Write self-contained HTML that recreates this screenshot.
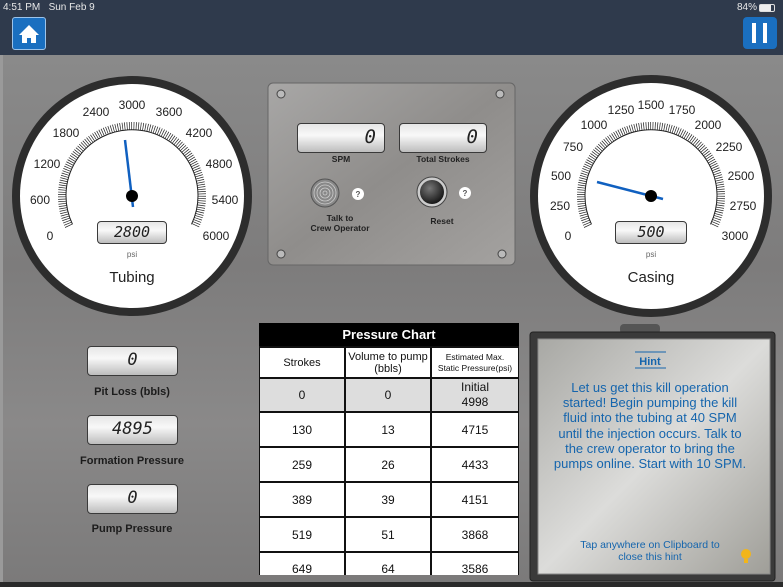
<!DOCTYPE html>
<html><head><meta charset="utf-8"><style>
*{margin:0;padding:0;box-sizing:border-box}
body{width:783px;height:587px;overflow:hidden;position:relative;font-family:"Liberation Sans",Arial,sans-serif;background:#8c8b8b}
.top{position:absolute;left:0;top:0;width:783px;height:55px;background:#2f3a4c}
.st{position:absolute;top:2px;font-size:10px;color:#e8e8e8}
.metal{position:absolute;left:0;top:55px;width:783px;height:527px;background:linear-gradient(180deg,#8a8a8a 0%,#7d7c7c 40%,#8a8989 70%,#7b7a7a 100%);border-left:3px solid #9a9a9a}
.bot{position:absolute;left:0;top:582px;width:783px;height:5px;background:#2a2a2a}
.lcd{position:absolute;border:1.5px solid #3a3a3a;border-radius:4px;background:linear-gradient(180deg,#e6e6e6,#f8f8f8 40%,#bdbdbd);font-family:"DejaVu Sans Mono",monospace;font-style:italic;color:#222;text-align:right;padding-right:8px}
.lbl{position:absolute;font-weight:bold;font-size:11px;color:#1c1c1c;text-align:center}
table{border-collapse:collapse}
td{border:2px solid #111;text-align:center;font-size:12px;color:#111;background:#fff}
</style></head><body>
<div class="top"></div>
<div class="st" style="left:3px">4:51 PM&nbsp;&nbsp; Sun Feb 9</div>
<div class="st" style="left:737px">84%</div>
<div style="position:absolute;left:759px;top:4px;width:16px;height:8px;border:1px solid #ddd;border-radius:2px"><div style="width:11px;height:6px;background:#eee"></div></div>
<div style="position:absolute;left:12px;top:17px;width:34px;height:33px;background:#1a6fc0;border:1px solid #9cc3ea;border-radius:3px"></div>
<svg style="position:absolute;left:12px;top:17px" width="34" height="33"><path d="M17 8 L27 18 L24 18 L24 26 L19 26 L19 21 L15 21 L15 26 L10 26 L10 18 L7 18 Z" fill="#fff"/></svg>
<div style="position:absolute;left:743px;top:17px;width:34px;height:32px;background:#1a6fc0;border-radius:4px"></div>
<div style="position:absolute;left:752px;top:23px;width:4px;height:20px;background:#fff"></div>
<div style="position:absolute;left:763px;top:23px;width:4px;height:20px;background:#fff"></div>
<div class="metal"></div>
<div class="bot"></div>

<svg style="position:absolute;left:0;top:0" width="783" height="587" font-family="Liberation Sans,Arial,sans-serif">
<defs>
<linearGradient id="pl" x1="0" y1="0" x2="1" y2="1"><stop offset="0" stop-color="#a8a7a6"/><stop offset=".5" stop-color="#8f8d8b"/><stop offset="1" stop-color="#a4a2a0"/></linearGradient>
<radialGradient id="btn" cx=".4" cy=".35" r=".7"><stop offset="0" stop-color="#777"/><stop offset="1" stop-color="#111"/></radialGradient>
</defs>
<!-- left gauge -->
<circle cx="132" cy="196" r="120" fill="#2d2d2d"/>
<circle cx="132" cy="196" r="112" fill="#fff"/>
<path d="M68.8 226.1 A70 70 0 1 1 195.2 226.1" fill="none" stroke="#222" stroke-width="8" stroke-dasharray="0.7 1.6"/>
<path d="M72.5 224.3 A66 66 0 1 1 191.5 224.3" fill="none" stroke="#222" stroke-width="1"/>
<g font-size="12" fill="#222" text-anchor="middle">
<text x="50" y="240">0</text><text x="40" y="204">600</text><text x="47" y="168">1200</text><text x="66" y="137">1800</text><text x="96" y="116">2400</text><text x="132" y="109">3000</text><text x="169" y="116">3600</text><text x="199" y="137">4200</text><text x="219" y="168">4800</text><text x="225" y="204">5400</text><text x="216" y="240">6000</text>
</g>
<line x1="133" y1="207" x2="125" y2="140" stroke="#1060c0" stroke-width="2.5"/>
<circle cx="132" cy="196" r="6" fill="#000"/>
<text x="132" y="257" font-size="8" fill="#666" text-anchor="middle">psi</text>
<text x="132" y="282" font-size="15" fill="#222" text-anchor="middle">Tubing</text>
<!-- right gauge -->
<circle cx="651" cy="196" r="121" fill="#2d2d2d"/>
<circle cx="651" cy="196" r="113" fill="#fff"/>
<path d="M587.8 226.1 A70 70 0 1 1 714.2 226.1" fill="none" stroke="#222" stroke-width="8" stroke-dasharray="0.7 1.6"/>
<path d="M591.5 224.3 A66 66 0 1 1 710.5 224.3" fill="none" stroke="#222" stroke-width="1"/>
<g font-size="12" fill="#222" text-anchor="middle">
<text x="568" y="240">0</text><text x="560" y="210">250</text><text x="561" y="180">500</text><text x="573" y="151">750</text><text x="594" y="129">1000</text><text x="621" y="114">1250</text><text x="651" y="109">1500</text><text x="682" y="114">1750</text><text x="708" y="129">2000</text><text x="729" y="151">2250</text><text x="741" y="180">2500</text><text x="743" y="210">2750</text><text x="735" y="240">3000</text>
</g>
<line x1="663" y1="199" x2="597" y2="182" stroke="#1060c0" stroke-width="2.5"/>
<circle cx="651" cy="196" r="6" fill="#000"/>
<text x="651" y="257" font-size="8" fill="#666" text-anchor="middle">psi</text>
<text x="651" y="282" font-size="15" fill="#222" text-anchor="middle">Casing</text>
<!-- center panel -->
<rect x="268" y="83" width="247" height="182" rx="5" fill="url(#pl)" stroke="#666"/>
<g fill="#bbb" stroke="#444"><circle cx="281" cy="94" r="4"/><circle cx="500" cy="94" r="4"/><circle cx="281" cy="254" r="4"/><circle cx="502" cy="254" r="4"/></g>
<circle cx="325" cy="193" r="14" fill="#888" stroke="#555"/>
<g fill="none" stroke="#ccc" stroke-width=".8"><circle cx="325" cy="193" r="11"/><circle cx="325" cy="193" r="8"/><circle cx="325" cy="193" r="5"/><circle cx="325" cy="193" r="2"/></g>
<circle cx="432" cy="192" r="15" fill="#ccc" stroke="#444"/>
<circle cx="432" cy="192" r="12" fill="url(#btn)"/>
<g font-size="8" font-weight="bold" text-anchor="middle"><circle cx="358" cy="194" r="6" fill="#fff"/><text x="358" y="197" fill="#555">?</text><circle cx="465" cy="193" r="6" fill="#fff"/><text x="465" y="196" fill="#555">?</text></g>
<g font-size="8.5" font-weight="bold" fill="#222" text-anchor="middle"><text x="341" y="162">SPM</text><text x="443" y="162">Total Strokes</text><text x="340" y="221">Talk to</text><text x="340" y="231">Crew Operator</text><text x="442" y="224">Reset</text></g>
<!-- clipboard -->
<rect x="620" y="324" width="40" height="10" rx="4" fill="#555"/>
<rect x="530" y="332" width="245" height="249" rx="3" fill="#3a3a3a" stroke="#222"/>
<defs><linearGradient id="pp" x1="0" y1="0" x2="1" y2="1"><stop offset="0" stop-color="#a8a8a4"/><stop offset=".5" stop-color="#dcdcda"/><stop offset="1" stop-color="#9f9e98"/></linearGradient></defs>
<rect x="538" y="339" width="232" height="235" fill="url(#pp)" stroke="#888"/>
<g fill="#1565ad" text-anchor="middle" font-size="13">
<line x1="635" y1="352" x2="666" y2="352" stroke="#1565ad"/>
<text x="650" y="365" font-size="11" font-weight="bold">Hint</text>
<line x1="635" y1="368" x2="666" y2="368" stroke="#1565ad"/>
<text x="650" y="392">Let us get this kill operation</text>
<text x="650" y="407">started! Begin pumping the kill</text>
<text x="650" y="422">fluid into the tubing at 40 SPM</text>
<text x="650" y="438">until the injection occurs. Talk to</text>
<text x="650" y="453">the crew operator to bring the</text>
<text x="650" y="468">pumps online. Start with 10 SPM.</text>
<text x="650" y="548" font-size="10.5">Tap anywhere on Clipboard to</text>
<text x="650" y="560" font-size="10.5">close this hint</text>
</g>
<circle cx="746" cy="554" r="5" fill="#f2b51a"/><rect x="744" y="559" width="4" height="4" fill="#f2b51a"/>
</svg>

<div class="lcd" style="left:297px;top:123px;width:88px;height:30px;font-size:19px;line-height:27px">0</div>
<div class="lcd" style="left:399px;top:123px;width:88px;height:30px;font-size:19px;line-height:27px">0</div>
<div class="lcd" style="left:97px;top:221px;width:70px;height:23px;font-size:15px;line-height:20px;text-align:center;padding:0">2800</div>
<div class="lcd" style="left:615px;top:221px;width:72px;height:23px;font-size:15px;line-height:20px;text-align:center;padding:0">500</div>
<div class="lcd" style="left:87px;top:346px;width:91px;height:30px;font-size:17px;line-height:27px;text-align:center;padding:0">0</div>
<div class="lcd" style="left:87px;top:415px;width:91px;height:30px;font-size:17px;line-height:27px;text-align:center;padding:0">4895</div>
<div class="lcd" style="left:87px;top:484px;width:91px;height:30px;font-size:17px;line-height:27px;text-align:center;padding:0">0</div>
<div class="lbl" style="left:52px;top:386px;width:160px">Pit Loss (bbls)</div>
<div class="lbl" style="left:52px;top:455px;width:160px">Formation Pressure</div>
<div class="lbl" style="left:52px;top:523px;width:160px">Pump Pressure</div>

<div style="position:absolute;left:259px;top:323px;width:260px;height:252px;overflow:hidden;background:#fff">
<div style="height:23px;background:#000;color:#fff;font-weight:bold;font-size:13px;text-align:center;line-height:23px">Pressure Chart</div>
<table style="width:262px;margin-left:-1px">
<tr style="height:31px"><td style="width:86px;font-size:11px">Strokes</td><td style="width:86px;font-size:11px;line-height:12px">Volume to pump<br>(bbls)</td><td style="font-size:8.5px;line-height:11px">Estimated Max.<br>Static Pressure(psi)</td></tr>
<tr style="height:34px"><td style="background:#ddd">0</td><td style="background:#ddd">0</td><td style="background:#ddd;line-height:15px">Initial<br>4998</td></tr>
<tr style="height:35px"><td>130</td><td>13</td><td>4715</td></tr>
<tr style="height:35px"><td>259</td><td>26</td><td>4433</td></tr>
<tr style="height:35px"><td>389</td><td>39</td><td>4151</td></tr>
<tr style="height:35px"><td>519</td><td>51</td><td>3868</td></tr>
<tr style="height:35px"><td style="vertical-align:top;padding-top:9px">649</td><td style="vertical-align:top;padding-top:9px">64</td><td style="vertical-align:top;padding-top:9px">3586</td></tr>
</table></div>
</body></html>
